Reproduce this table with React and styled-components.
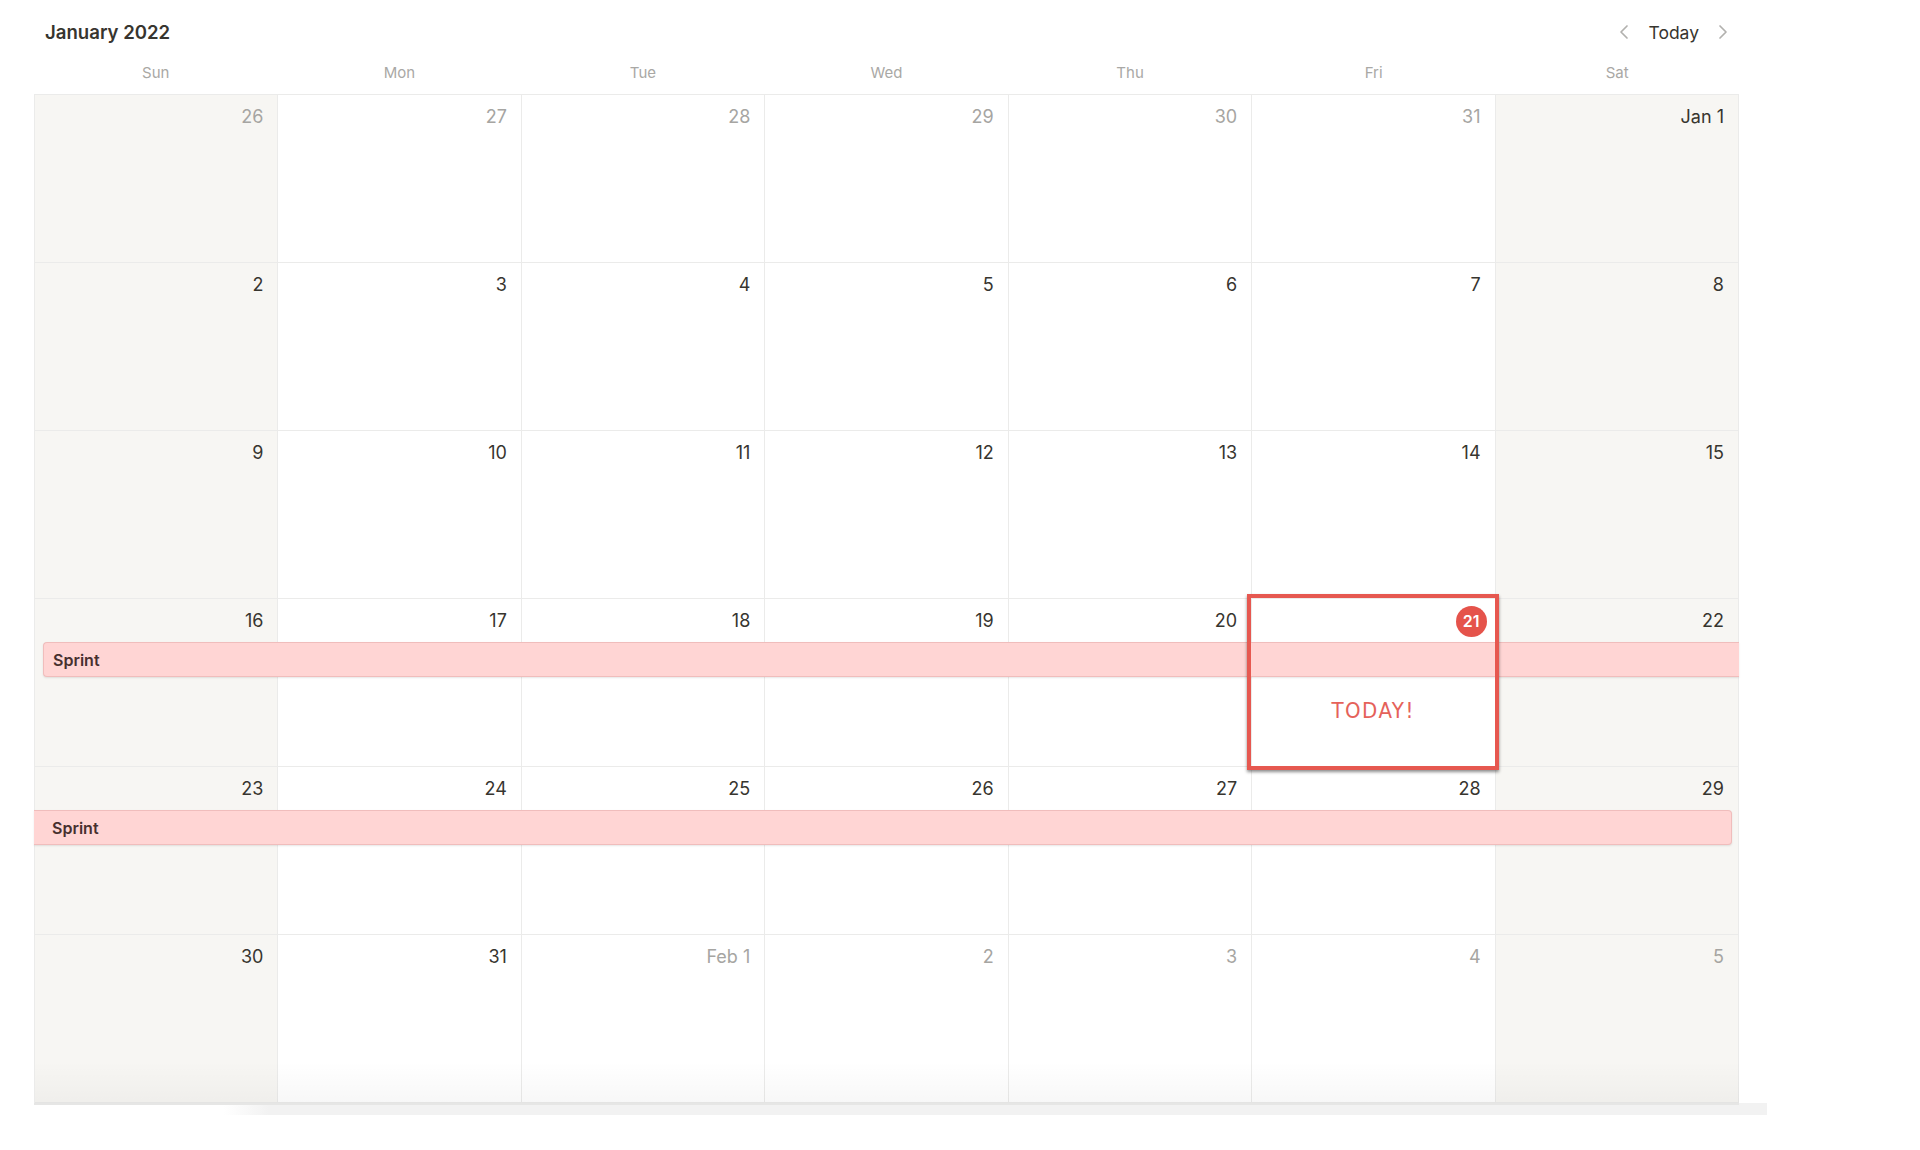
import React from "react";
import styled, { createGlobalStyle } from "styled-components";

const GlobalStyle = createGlobalStyle`
    html, body {
        margin: 0;
        padding: 0;
        background: #fff;
    }
    body {
        font-family: Inter, "Noto Sans", "Liberation Sans", sans-serif;
        color: #37352f;
        -webkit-font-smoothing: antialiased;
    }
`;

const LINE = "#ebebea";
const WEEKEND = "#f7f6f3";

const Page = styled.div`
    width: 1920px;
    height: 1150px;
    overflow: hidden;
    box-sizing: border-box;
    padding: 20px 0 0 34px;
`;
const Board = styled.div`
    width: 1705px;
`;
const Header = styled.div`
    display: flex;
    align-items: center;
    justify-content: space-between;
    height: 24px;
    padding: 0 6px 0 11px;
`;
const Title = styled.h1`
    margin: 0;
    font-size: 18.6px;
    font-weight: 600;
    color: #37352f;
`;
const Nav = styled.div`
    display: flex;
    align-items: center;
`;
const Arrow = styled.button`
    border: none;
    background: none;
    padding: 0;
    width: 20px;
    height: 24px;
    display: flex;
    align-items: center;
    justify-content: center;
    color: #b2b1ae;
    cursor: pointer;
`;
const TodayButton = styled.button`
    border: none;
    background: none;
    padding: 0 14px 0 14px;
    font-family: inherit;
    font-size: 17.5px;
    color: #37352f;
    cursor: pointer;
`;
const WeekDays = styled.div`
    display: grid;
    grid-template-columns: repeat(7, 1fr);
    margin: 14px 0 8px;
    height: 28px;
    align-items: center;
    .name {
        text-align: center;
        font-size: 15px;
        color: #a9a8a5;
    }
`;
const Grid = styled.div`
    position: relative;
    border-top: 1px solid ${LINE};
    border-left: 1px solid ${LINE};
    box-shadow: 0 2px 0 #e6e6e5;
    &::after {
        content: "";
        position: absolute;
        left: 0;
        right: 0;
        bottom: 0;
        height: 42px;
        background: linear-gradient(rgba(0, 0, 0, 0), rgba(0, 0, 0, 0.03));
        pointer-events: none;
    }
`;
const WeekRow = styled.div`
    display: grid;
    grid-template-columns: repeat(7, 1fr);
    grid-template-rows: 43px 35px 1fr;
    height: 168px;
`;
const Cell = styled.div`
    grid-row: 1 / -1;
    grid-column: ${(p) => p.$col};
    position: relative;
    min-width: 0;
    background: ${(p) => (p.$weekend ? WEEKEND : "#fff")};
    border-right: 1px solid ${LINE};
    border-bottom: 1px solid ${LINE};
`;
const CellHead = styled.div`
    display: flex;
    justify-content: flex-end;
    align-items: center;
    height: 43px;
    padding-right: 14px;
    box-sizing: border-box;
`;
const DayNum = styled.span`
    font-size: 18px;
    line-height: 1;
    color: ${(p) => (p.$muted ? "#a6a5a2" : "#37352f")};
`;
const TodayBadge = styled.span`
    width: 31px;
    height: 31px;
    margin: 1px -6px 0 0;
    border-radius: 50%;
    background: #e5534b;
    color: #fff;
    font-size: 16px;
    font-weight: 600;
    display: flex;
    align-items: center;
    justify-content: center;
`;
const EventBar = styled.div`
    grid-row: 2;
    grid-column: 1 / 8;
    position: relative;
    z-index: 1;
    margin-left: ${(p) => (p.$fromLeft ? -1 : 8)}px;
    margin-right: ${(p) => (p.$toRight ? 0 : 7)}px;
    padding-left: ${(p) => (p.$fromLeft ? 18 : 9)}px;
    display: flex;
    align-items: center;
    background: #ffd5d4;
    border: 1px solid #f0bdbc;
    border-left-width: ${(p) => (p.$fromLeft ? 0 : 1)}px;
    border-right-width: ${(p) => (p.$toRight ? 0 : 1)}px;
    border-radius: ${(p) => (p.$fromLeft ? 0 : 4)}px ${(p) => (p.$toRight ? 0 : 4)}px ${(p) => (p.$toRight ? 0 : 4)}px ${(p) => (p.$fromLeft ? 0 : 4)}px;
    box-shadow: 0 1px 2px rgba(15, 15, 15, 0.1);
    font-size: 16px;
    font-weight: 600;
    color: #47302f;
`;
const TodayMark = styled.div`
    position: absolute;
    left: -5px;
    top: -5px;
    width: 252px;
    height: 176px;
    box-sizing: border-box;
    border: 4px solid #e65850;
    box-shadow: 0 2px 3px rgba(0, 0, 0, 0.45);
    z-index: 3;
    display: flex;
    justify-content: center;
    padding-top: 101px;
    pointer-events: none;
    span {
        font-family: "DejaVu Sans Condensed", "DejaVu Sans", "Liberation Sans Narrow", sans-serif;
        font-stretch: condensed;
        font-size: 22px;
        line-height: 24px;
        letter-spacing: 1.5px;
        color: #e5625a;
    }
`;
const ShadowBand = styled.div`
    margin: 0 0 0 190px;
    width: 1543px;
    height: 12px;
    background: linear-gradient(to right, rgba(242, 242, 242, 0), #f2f2f2 45px);
`;

const Chevron = ({ dir }) => (
    <svg width="10" height="16" viewBox="0 0 10 16" fill="none" stroke="currentColor" strokeWidth="1.7" strokeLinecap="round" strokeLinejoin="round">
        {dir === "left" ? <polyline points="8,2 2,8 8,14" /> : <polyline points="2,2 8,8 2,14" />}
    </svg>
);

const dayNames = ["Sun", "Mon", "Tue", "Wed", "Thu", "Fri", "Sat"];

const range = (a, b) => {
    const out = [];
    for (let i = a; i <= b; i++) out.push({ label: String(i) });
    return out;
};

const weeks = [
    { days: [...range(26, 31).map((d) => ({ ...d, muted: true })), { label: "Jan 1" }] },
    { days: range(2, 8) },
    { days: range(9, 15) },
    { days: range(16, 22), event: { title: "Sprint", fromLeft: false, toRight: true } },
    { days: range(23, 29), event: { title: "Sprint", fromLeft: true, toRight: false } },
    {
        days: [
            { label: "30" },
            { label: "31" },
            { label: "Feb 1", muted: true },
            ...range(2, 5).map((d) => ({ ...d, muted: true }))
        ]
    }
];

const TODAY = "21";

export default function App() {
    return (
        <React.Fragment>
            <GlobalStyle />
            <Page>
                <Board>
                    <Header>
                        <Title>January 2022</Title>
                        <Nav>
                            <Arrow><Chevron dir="left" /></Arrow>
                            <TodayButton>Today</TodayButton>
                            <Arrow><Chevron dir="right" /></Arrow>
                        </Nav>
                    </Header>
                    <WeekDays>
                        {dayNames.map((n) => (
                            <div className="name" key={n}>{n}</div>
                        ))}
                    </WeekDays>
                    <Grid>
                        {weeks.map((week, w) => (
                            <WeekRow key={w}>
                                {week.days.map((day, i) => {
                                    const isToday = w === 3 && day.label === TODAY;
                                    return (
                                        <Cell key={i} $col={i + 1} $weekend={i === 0 || i === 6}>
                                            <CellHead>
                                                {isToday ?
                                                    <TodayBadge>{day.label}</TodayBadge>
                                                    :
                                                    <DayNum $muted={day.muted}>{day.label}</DayNum>
                                                }
                                            </CellHead>
                                            {isToday ?
                                                <TodayMark><span>TODAY!</span></TodayMark>
                                                :
                                                null
                                            }
                                        </Cell>
                                    );
                                })}
                                {week.event ?
                                    <EventBar $fromLeft={week.event.fromLeft} $toRight={week.event.toRight}>
                                        {week.event.title}
                                    </EventBar>
                                    :
                                    null
                                }
                            </WeekRow>
                        ))}
                    </Grid>
                    <ShadowBand />
                </Board>
            </Page>
        </React.Fragment>
    );
}
